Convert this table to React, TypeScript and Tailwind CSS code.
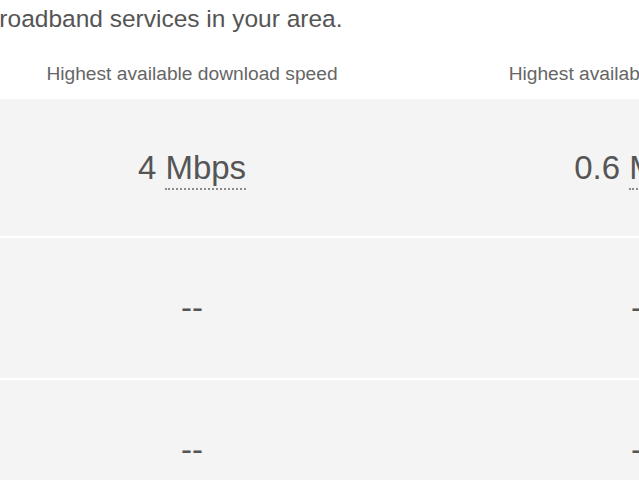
const speeds = [
  { down: '4', up: '0.6' },
  { down: null, up: null },
  { down: null, up: null },
]

function Value({ v }: { v: string | null }) {
  if (!v) return <span>--</span>
  return (
    <span>
      {v}{' '}
      <abbr title="Megabits per second" className="no-underline pb-[2px] border-b-2 border-dotted border-[#8a8a8a]">Mbps</abbr>
    </span>
  )
}

export default function App() {
  return (
    <div className="w-[639px] h-[480px] overflow-hidden bg-white font-['Liberation_Sans',Arial,sans-serif]">
      <p className="ml-[-17px] pt-[5px] text-[24.5px] leading-[28px] text-[#555] whitespace-nowrap">
        Broadband services in your area.
      </p>
      <div className="ml-[-33px] w-[900px]">
        <div className="grid grid-cols-[450px_450px] mt-[29px] h-[37px] text-[19.2px] leading-[24px] text-[#666]">
          <div className="text-center">Highest available download speed</div>
          <div className="text-center">Highest available upload speed</div>
        </div>
        <div className="bg-[#f4f4f4]">
          {speeds.map((row, i) => (
            <div
              key={i}
              className={`grid grid-cols-[450px_450px] items-center text-[33px] text-[#555] ${i === 0 ? 'h-[137px]' : 'h-[142px] border-t-2 border-white'}`}
            >
              <div className="text-center"><Value v={row.down} /></div>
              <div className="text-center"><Value v={row.up} /></div>
            </div>
          ))}
        </div>
      </div>
    </div>
  )
}
